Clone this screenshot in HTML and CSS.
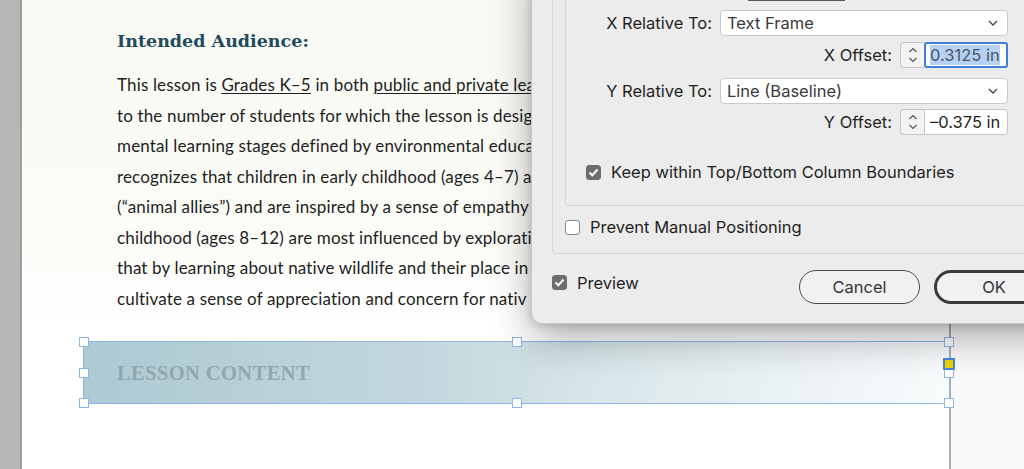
FILE: index.html
```html
<!doctype html>
<html>
  <head>
    <meta charset="utf-8">
    <title>Anchored Object Options</title>
    <link rel="stylesheet" href="styles.css">
  </head>
  <body>
    <div class="workspace">
      <div class="sidebar"></div>

      <div class="spread">
        <div class="page">
          <h2 class="page-heading">Intended Audience:</h2>
          <p class="page-text">
            This lesson is <u>Grades K–5</u> in both <u>public and private lea</u><br>
            to the number of students for which the lesson is desig<br>
            mental learning stages defined by environmental educa<br>
            recognizes that children in early childhood (ages 4–7) a<br>
            (“animal allies”) and are inspired by a sense of empathy<br>
            childhood (ages 8–12) are most influenced by exploratio<br>
            that by learning about native wildlife and their place in<br>
            cultivate a sense of appreciation and concern for nativ
          </p>

          <div class="frame">
            <span class="frame-title">LESSON CONTENT</span>
            <span class="handle h-tl"></span>
            <span class="handle h-tc"></span>
            <span class="handle h-tr"></span>
            <span class="handle h-ml"></span>
            <span class="handle h-mr"></span>
            <span class="handle h-bl"></span>
            <span class="handle h-bc"></span>
            <span class="handle h-br"></span>
            <span class="anchor-mark"></span>
          </div>
        </div>
        <div class="pasteboard"></div>
      </div>
    </div>

    <div class="dialog">
      <div class="group-outer">
        <div class="group-inner">
          <span class="tab-edge"></span>

          <div class="field-row">
            <label class="field-label">X Relative To:</label>
            <div class="select">
              <span>Text Frame</span>
              <svg class="chevron" width="10" height="6" viewBox="0 0 10 6"><path d="M1 1l4 4 4-4" fill="none" stroke="#444" stroke-width="1.3"/></svg>
            </div>
          </div>

          <div class="offset-row row-x">
            <label class="field-label">X Offset:</label>
            <div class="stepper">
              <svg width="10" height="20" viewBox="0 0 10 20"><path d="M1.5 7l3.5-3.5L8.5 7M1.5 13l3.5 3.5 3.5-3.5" fill="none" stroke="#555" stroke-width="1.2"/></svg>
            </div>
            <div class="num-input focused"><span class="selected">0.3125 in</span></div>
          </div>

          <div class="field-row row-y">
            <label class="field-label">Y Relative To:</label>
            <div class="select">
              <span>Line (Baseline)</span>
              <svg class="chevron" width="10" height="6" viewBox="0 0 10 6"><path d="M1 1l4 4 4-4" fill="none" stroke="#444" stroke-width="1.3"/></svg>
            </div>
          </div>

          <div class="offset-row row-yo">
            <label class="field-label">Y Offset:</label>
            <div class="stepper">
              <svg width="10" height="20" viewBox="0 0 10 20"><path d="M1.5 7l3.5-3.5L8.5 7M1.5 13l3.5 3.5 3.5-3.5" fill="none" stroke="#555" stroke-width="1.2"/></svg>
            </div>
            <div class="num-input"><span>–0.375 in</span></div>
          </div>

          <div class="check-row keep-row">
            <span class="checkbox checked">
              <svg width="11" height="9" viewBox="0 0 11 9"><path d="M1.5 4.5l2.8 2.8L9.5 1.5" fill="none" stroke="#fff" stroke-width="2"/></svg>
            </span>
            <span>Keep within Top/Bottom Column Boundaries</span>
          </div>
        </div>

        <div class="check-row prevent-row">
          <span class="checkbox"></span>
          <span>Prevent Manual Positioning</span>
        </div>
      </div>

      <div class="dialog-footer">
        <div class="check-row">
          <span class="checkbox checked">
            <svg width="11" height="9" viewBox="0 0 11 9"><path d="M1.5 4.5l2.8 2.8L9.5 1.5" fill="none" stroke="#fff" stroke-width="2"/></svg>
          </span>
          <span>Preview</span>
        </div>
        <div class="buttons">
          <button class="btn">Cancel</button>
          <button class="btn btn-default">OK</button>
        </div>
      </div>
    </div>
  </body>
</html>
```

FILE: styles.css
```css
html, body {
  margin:0;
  padding:0;
  width:1024px;
  height:469px;
  overflow:hidden;
}

body {
  font-family:Inter, sans-serif;
  background-color:#f8f8f8;
  position:relative;
}

.workspace {
  display:flex;
  height:469px;
}

.sidebar {
  width:20px;
  flex:none;
  background-color:#b7b7b7;
  border-right:2px solid #9d9d9d;
}

.spread {
  display:flex;
  flex:1;
}

.page {
  width:929px;
  flex:none;
  border-right:2px solid #acacac;
  background:linear-gradient(#f9f9f4 0, #fbfbf7 240px, #ffffff 320px);
  padding-top:30px;
  box-sizing:border-box;
}

.pasteboard {
  flex:1;
  background-color:#fafafa;
}

.page-heading {
  margin:0 0 0 95px;
  font-family:"DejaVu Serif", serif;
  font-weight:bold;
  font-size:17.5px;
  line-height:22px;
  color:#244a5d;
}

.page-text {
  margin:18px 0 0 95px;
  font-family:Lato, sans-serif;
  font-size:17px;
  letter-spacing:0.15px;
  line-height:30.5px;
  color:#1e1e1e;
  white-space:nowrap;
}

.page-text u {
  text-decoration-thickness:1px;
  text-underline-offset:2px;
}

.frame {
  position:relative;
  margin:27px 0 0 61px;
  width:867px;
  height:63px;
  box-sizing:border-box;
  border:1px solid #8cb6ea;
  background:linear-gradient(90deg, #adc9d2 0, #c3d8de 40%, #d9e7ea 60%, #eef4f6 85%, #f9fbfc 100%);
  display:flex;
  align-items:center;
  padding-left:33px;
}

.frame-title {
  font-family:"Liberation Serif", serif;
  font-weight:bold;
  font-size:20.5px;
  color:#8fa7af;
  letter-spacing:0.4px;
  padding-top:2px;
}

.handle {
  position:absolute;
  width:8px;
  height:8px;
  background-color:#fff;
  border:1px solid #8cb6ea;
}

.h-tl { left:-5px; top:-5px; }
.h-tc { left:428px; top:-5px; }
.h-tr { right:-5px; top:-5px; }
.h-ml { left:-5px; top:26px; }
.h-mr { right:-5px; top:26px; }
.h-bl { left:-5px; bottom:-5px; }
.h-bc { left:428px; bottom:-5px; }
.h-br { right:-5px; bottom:-5px; }

.anchor-mark {
  position:absolute;
  right:-6px;
  top:16px;
  width:8px;
  height:8px;
  background-color:#f2d600;
  border:2px solid #4d86dc;
}

/* dialog */

.dialog {
  position:absolute;
  left:531px;
  top:-40px;
  width:540px;
  height:364px;
  box-sizing:border-box;
  background-color:#ececec;
  border-radius:11px;
  border:1px solid #c9c9c9;
  box-shadow:0 14px 40px rgba(0,0,0,0.32), 0 2px 8px rgba(0,0,0,0.15);
  padding:9px 0 0 20px;
  font-family:Inter, sans-serif;
  font-size:16.5px;
  color:#1f1f1f;
}

.group-outer {
  border:1px solid #d6d6d6;
  border-radius:4px;
  padding:0 0 16px 12px;
}

.group-inner {
  position:relative;
  border:1px solid #d6d6d6;
  border-top:none;
  border-radius:0 0 4px 4px;
  padding:39px 0 23px 0;
  margin-right:-10px;
}

.tab-edge {
  position:absolute;
  left:182px;
  top:29px;
  width:97px;
  height:0;
  border-top:1.5px solid #555;
}

.field-row {
  display:flex;
  align-items:center;
  gap:8px;
}

.field-label {
  width:146px;
  text-align:right;
  flex:none;
}

.select {
  width:288px;
  height:26px;
  box-sizing:border-box;
  background-color:#fff;
  border:1px solid #c8c8c8;
  border-radius:4px;
  display:flex;
  align-items:center;
  justify-content:space-between;
  padding:0 9px 0 6px;
  color:#3a3a3a;
}

.offset-row {
  display:flex;
  align-items:center;
  width:442px;
  justify-content:flex-end;
}

.offset-row .field-label {
  width:auto;
  margin-right:8px;
}

.row-x { margin-top:6px; }
.row-y { margin-top:10px; }
.row-yo { margin-top:5px; }

.stepper {
  width:24px;
  height:26px;
  box-sizing:border-box;
  border:1px solid #c5c5c5;
  border-right:none;
  border-radius:4px 0 0 4px;
  background-color:#f3f3f3;
  display:flex;
  align-items:center;
  justify-content:center;
}

.num-input {
  width:84px;
  height:26px;
  box-sizing:border-box;
  background-color:#fff;
  border:1px solid #c5c5c5;
  border-radius:0 4px 4px 0;
  display:flex;
  align-items:center;
  padding-left:5px;
  font-size:16.5px;
  color:#1f1f1f;
  overflow:hidden;
  white-space:nowrap;
}

.num-input.focused {
  border:2px solid #3f7fd9;
  border-radius:3px;
  padding-left:4px;
}

.selected {
  background-color:#b5d2f6;
  color:#4b5560;
}

.check-row {
  display:flex;
  align-items:center;
  gap:10px;
}

.keep-row {
  margin:27px 0 0 20px;
}

.prevent-row {
  margin-top:11px;
}

.checkbox {
  width:15px;
  height:15px;
  box-sizing:border-box;
  border:1px solid #8a8a8a;
  border-radius:3px;
  background-color:#fff;
  display:flex;
  align-items:center;
  justify-content:center;
  flex:none;
}

.checkbox.checked {
  background-color:#6d6d6d;
  border-color:#6d6d6d;
}

.dialog-footer {
  display:flex;
  align-items:center;
  justify-content:space-between;
  margin-top:7px;
  padding-right:16px;
}

.buttons {
  display:flex;
  gap:14px;
  margin-top:9px;
}

.btn {
  width:121px;
  height:34px;
  border:1.5px solid #4a4a4a;
  border-radius:17px;
  background-color:#f1f1f1;
  font-family:Inter, sans-serif;
  font-size:16.5px;
  color:#333;
}

.btn-default {
  border:3px solid #3b3b3b;
  width:120px;
}
```
